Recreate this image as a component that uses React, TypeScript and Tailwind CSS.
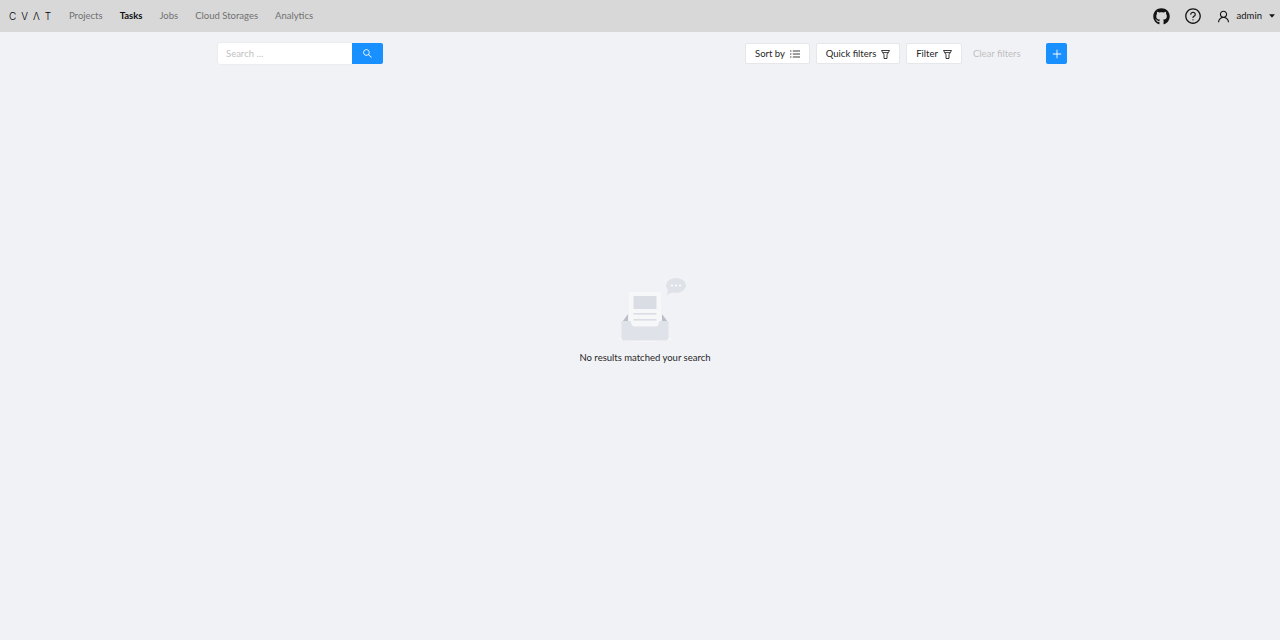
import { AiFillCaretDown, AiOutlinePlus, AiOutlineQuestionCircle, AiOutlineSearch, AiOutlineUser } from 'react-icons/ai';
import { FaGithub } from 'react-icons/fa';

const navItems = ['Projects', 'Tasks', 'Jobs', 'Cloud Storages', 'Analytics'];

function SortIcon() {
  return (
    <svg width="10" height="8" viewBox="0 0 10 8" fill="none" stroke="#262626" strokeWidth="0.9">
      <path d="M2.800 1h7.200M2.800 4h7.200M2.800 7h7.200" />
      <path d="M0 1h1.400M0 4h1.400M0 7h1.400" />
    </svg>
  );
}

function FunnelIcon() {
  return (
    <svg width="9" height="9" viewBox="0 0 9 9" fill="none" stroke="#262626" strokeWidth="0.9">
      <path d="M0.500 0.500h8L6 4.700v3.800H3V4.700z" />
      <path d="M1.800 2.600h5.400" />
    </svg>
  );
}

function EmptyInbox() {
  return (
    <svg width="104" height="68" viewBox="-20 0 104 68">
      <ellipse cx="32" cy="62" rx="27" ry="3" fill="#f5f6f9" />
      <path d="M8.500 46 L15 37 V52 Z M55.500 46 L49 37 V52 Z" fill="#b9bfc9" />
      <rect x="16" y="15" width="32" height="40" rx="1" fill="#f6f7f9" />
      <rect x="20.500" y="19" width="23" height="13" fill="#dadde4" />
      <rect x="20.500" y="36" width="23" height="1.600" fill="#dadde4" />
      <rect x="20.500" y="42" width="23" height="1.600" fill="#dadde4" />
      <path d="M8.500 44 H17 C18 44 18 45 18.500 47 C19 49 20 49.500 22 49.500 H42 C44 49.500 45 49 45.500 47 C46 45 46 44 47 44 H55.500 V61 C55.500 62.500 54.500 63.500 53 63.500 H11 C9.500 63.500 8.500 62.500 8.500 61 Z" fill="#dfe2e8" />
      <ellipse cx="63" cy="8.500" rx="10" ry="7.500" fill="#dfe2e8" />
      <path d="M55 12 L54 18 L60 15 Z" fill="#dfe2e8" />
      <circle cx="59" cy="8.500" r="1" fill="#fff" />
      <circle cx="63" cy="8.500" r="1" fill="#fff" />
      <circle cx="67" cy="8.500" r="1" fill="#fff" />
    </svg>
  );
}

export default function App() {
  return (
    <div className="flex h-[640px] flex-col overflow-hidden bg-[#f1f2f6] font-['Lato','Noto_Sans',sans-serif] text-[9.500px] text-[#262626]">
      {/* Header */}
      <header className="flex h-8 shrink-0 items-center justify-between bg-[#d8d8d8] pl-[9px]">
        <div className="flex items-center">
          <span className="w-[44px] whitespace-nowrap font-['Inter',sans-serif] text-[10px] font-light leading-none tracking-[5px] text-black">CVΛT</span>
          <nav className="ml-4 flex items-center gap-[17px] pt-px">
            {navItems.map((item) => (
              <span key={item} className={item === 'Tasks' ? 'font-bold text-[#111]' : 'text-[#707070]'}>
                {item}
              </span>
            ))}
          </nav>
        </div>
        <div className="flex items-center">
          <FaGithub className="text-[17px] text-[#141414]" />
          <AiOutlineQuestionCircle className="ml-[14px] text-[18px] text-[#141414]" />
          <AiOutlineUser className="ml-[14px] text-[15px] text-[#141414]" />
          <span className="ml-[6px] pt-px text-[#141414]">admin</span>
          <AiFillCaretDown className="ml-[6px] mr-[4px] text-[8px] text-[#141414]" />
        </div>
      </header>

      {/* Top bar */}
      <div className="ml-[218px] mt-[11px] flex w-[849px] items-center justify-between">
        <div className="flex h-[21px] w-[165px]">
          <div className="flex flex-1 items-center rounded-l-[2px] bg-white pl-2 pt-px text-[#bfbfbf] shadow-[0_0_2px_rgba(0,0,0,0.08)]">Search ...</div>
          <button className="flex w-[31px] items-center justify-center rounded-r-[2px] bg-[#1890ff] text-white">
            <AiOutlineSearch className="text-[11px]" />
          </button>
        </div>
        <div className="flex items-center">
          <button className="flex h-[21px] w-[65px] items-center justify-center gap-[5px] rounded-[2px] border border-[#e6e7ea] bg-white pt-px">
            Sort by <SortIcon />
          </button>
          <button className="ml-[6px] flex h-[21px] w-[84px] items-center justify-center gap-[5px] rounded-[2px] border border-[#e6e7ea] bg-white pt-px">
            Quick filters <FunnelIcon />
          </button>
          <button className="ml-[6px] flex h-[21px] w-[56px] items-center justify-center gap-[5px] rounded-[2px] border border-[#e6e7ea] bg-white pt-px">
            Filter <FunnelIcon />
          </button>
          <span className="ml-[11px] w-[73px] pt-px text-[#bfbfbf]">Clear filters</span>
          <button className="flex h-[21px] w-[21px] items-center justify-center rounded-[2px] bg-[#1890ff] text-white">
            <AiOutlinePlus className="text-[12px]" />
          </button>
        </div>
      </div>

      {/* Empty state */}
      <div className="ml-[10px] mt-[213px] flex flex-col items-center">
        <EmptyInbox />
        <p className="mt-[6px]">No results matched your search</p>
      </div>
    </div>
  );
}
